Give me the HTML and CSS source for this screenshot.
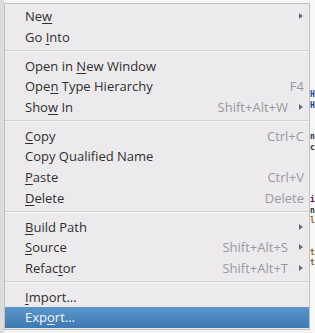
FILE: index.html
```html
<!DOCTYPE html>
<html lang="en">
<head>
  <meta charset="UTF-8" />
  <meta name="viewport" content="width=device-width, initial-scale=1" />
  <title>Context Menu</title>
  <link rel="stylesheet" href="styles.css">
</head>
<body>

  <div class="screen">
    <!-- Left gutter of the editor -->
    <div class="gutter"></div>

    <!-- Context Menu -->
    <div class="menu">
      <div class="item sub"><span class="label">Ne<u>w</u></span><span class="arrow"></span></div>
      <div class="item"><span class="label">Go <u>I</u>nto</span></div>
      <div class="sep"></div>
      <div class="item"><span class="label">Open in <u>N</u>ew Window</span></div>
      <div class="item"><span class="label">Ope<u>n</u> Type Hierarchy</span><span class="key">F4</span></div>
      <div class="item sub"><span class="label">Sho<u>w</u> In</span><span class="key">Shift+Alt+W</span><span class="arrow"></span></div>
      <div class="sep"></div>
      <div class="item"><span class="label"><u>C</u>opy</span><span class="key">Ctrl+C</span></div>
      <div class="item"><span class="label">Copy Qualified Name</span></div>
      <div class="item"><span class="label"><u>P</u>aste</span><span class="key">Ctrl+V</span></div>
      <div class="item"><span class="label"><u>D</u>elete</span><span class="key">Delete</span></div>
      <div class="sep"></div>
      <div class="item sub"><span class="label"><u>B</u>uild Path</span><span class="arrow"></span></div>
      <div class="item sub"><span class="label"><u>S</u>ource</span><span class="key">Shift+Alt+S</span><span class="arrow"></span></div>
      <div class="item sub"><span class="label">Refac<u>t</u>or</span><span class="key">Shift+Alt+T</span><span class="arrow"></span></div>
      <div class="sep"></div>
      <div class="item"><span class="label"><u>I</u>mport...</span></div>
      <div class="item active"><span class="label">Exp<u>o</u>rt...</span></div>
    </div>

    <!-- Editor peeking out on the right -->
    <div class="editor">
      <div class="code-line type">H</div>
      <div class="code-line type">H</div>
      <div class="gap"></div>
      <div class="code-line">n</div>
      <div class="code-line">c</div>
      <div class="gap big"></div>
      <div class="code-line key">i</div>
      <div class="code-line">n</div>
      <div class="code-line str">l</div>
      <div class="gap"></div>
      <div class="code-line str">t</div>
      <div class="code-line str">t</div>
    </div>
  </div>

</body>
</html>
```

FILE: styles.css
```css
/* Reset & General */
body, html {
  margin: 0;
  padding: 0;
  font-family: 'Open Sans', 'Noto Sans', sans-serif;
  background: #f4f4f4;
  height: 100%;
  overflow: hidden;
}

* {
  box-sizing: border-box;
}

.screen {
  display: flex;
  align-items: flex-start;
  height: 100%;
}

.gutter {
  width: 4px;
  height: 100%;
  background: #dcdcdc;
}

/* Editor on the right */
.editor {
  flex: 1;
  min-width: 0;
  height: 100%;
  overflow: hidden;
  background: #f7f7f7;
  padding-top: 90px;
  font-family: 'DejaVu Sans Mono', monospace;
  font-size: 8px;
  font-weight: bold;
  color: #333;
}

.code-line {
  height: 10.5px;
  line-height: 10.5px;
  white-space: nowrap;
}
.code-line.type { color: #23428c; }
.code-line.key { color: #7f0055; }
.code-line.str { color: #8a6a2a; }

.gap { height: 21px; }
.gap.big { height: 42px; }

/* Menu */
.menu {
  margin-top: 3px;
  width: 306px;
  flex-shrink: 0;
  background: #eceaed;
  border: 1px solid #c3c0c4;
  padding: 2px 0 1px;
  font-size: 13px;
  color: #2f2f2f;
}

.item {
  display: flex;
  align-items: center;
  height: 20.7px;
  padding: 0 10px 0 20px;
}

.item .label {
  flex: 1;
  white-space: nowrap;
}

.item u {
  text-decoration-thickness: 1px;
  text-underline-offset: 2px;
}

.item .key {
  color: #9a989c;
  white-space: nowrap;
  margin-right: -5px;
}

.item.sub .key {
  margin-right: 11px;
}

.item .arrow {
  width: 0;
  height: 0;
  border-top: 3px solid transparent;
  border-bottom: 3px solid transparent;
  border-left: 4px solid #6e6c70;
  margin-right: -4px;
}

.item.active {
  background: linear-gradient(#5b96cb, #3d79b2);
  color: #f2f6fa;
}

.sep {
  height: 2px;
  margin: 3px 0;
  background: #d3d0d4;
  border-bottom: 1px solid #f6f5f7;
}
```
